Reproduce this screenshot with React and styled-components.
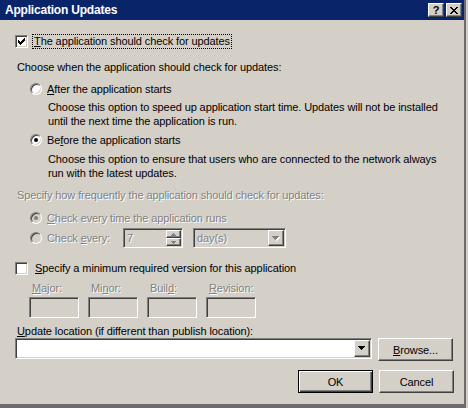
import React from "react"
import styled, { createGlobalStyle, css } from "styled-components"

const GlobalStyle = createGlobalStyle`
  html, body {
    margin: 0;
    padding: 0;
    background: #d4d0c8;
  }
  body {
    font-family: "Liberation Sans", Arial, sans-serif;
    font-size: 11px;
    letter-spacing: -0.1px;
    color: #000;
  }
`

const sunken = css`
  box-sizing: border-box;
  border: 1px solid;
  border-color: #808080 #ffffff #ffffff #808080;
  box-shadow: inset 1px 1px 0 #404040, inset -1px -1px 0 #d4d0c8;
`

const raised = css`
  box-sizing: border-box;
  background: #d4d0c8;
  border: 1px solid;
  border-color: #ffffff #404040 #404040 #ffffff;
  box-shadow: inset -1px -1px 0 #808080, inset 1px 1px 0 #d4d0c8;
`

const disabledText = css`
  color: #808080;
  text-shadow: 1px 1px 0 #ffffff;
`

const Window = styled.div`
  width: 466px;
  height: 408px;
  box-sizing: border-box;
  background: #d4d0c8;
  border-right: 2px solid #6c6c6c;
  border-bottom: 4px solid #6c6c6c;
  display: flex;
  flex-direction: column;
`

const TitleBar = styled.div`
  height: 20px;
  flex: none;
  background: #0a246a;
  display: flex;
  align-items: center;
  padding: 0 2px 0 5px;
`

const Title = styled.div`
  flex: 1;
  color: #fff;
  font-weight: bold;
  font-size: 12px;
  letter-spacing: -0.2px;
`

const CaptionButtons = styled.div`
  display: flex;
  gap: 2px;
`

const CaptionButton = styled.div`
  ${raised};
  width: 16px;
  height: 14px;
  display: flex;
  align-items: center;
  justify-content: center;
  font-weight: bold;
  font-size: 11px;
  line-height: 1;
`

const Body = styled.div`
  display: flex;
  flex-direction: column;
  padding: 0 10px 0 15px;
`

const Row = styled.div`
  display: flex;
  align-items: center;
  height: ${p => p.$h || 14}px;
  margin-top: ${p => p.$mt || 0}px;
  padding-left: ${p => p.$indent || 0}px;
  gap: ${p => p.$gap || 0}px;
`

const Line = styled.div`
  margin-top: ${p => p.$mt || 0}px;
  margin-left: ${p => p.$indent || 2}px;
  line-height: 14px;
  ${p => p.$disabled && disabledText};
`

const Desc = styled.div`
  margin-top: ${p => p.$mt || 0}px;
  margin-left: 33px;
  line-height: 14px;
  width: 400px;
`

const Box = styled.span`
  ${sunken};
  width: 13px;
  height: 13px;
  flex: none;
  background: #fff;
  display: flex;
  align-items: center;
  justify-content: center;
`

const Focus = styled.span`
  margin-left: 4px;
  padding: 0 1px;
  border: 1px dotted #000;
  line-height: 13px;
`

const Radio = styled.span`
  ${sunken};
  width: 12px;
  height: 12px;
  flex: none;
  border-radius: 50%;
  background: ${p => (p.$disabled ? "#d4d0c8" : "#fff")};
  display: flex;
  align-items: center;
  justify-content: center;

  &::after {
    content: "";
    display: ${p => (p.$checked ? "block" : "none")};
    width: 4px;
    height: 4px;
    border-radius: 50%;
    background: ${p => (p.$disabled ? "#808080" : "#000")};
  }
`

const RadioLabel = styled.span`
  margin-left: 5px;
  ${p => p.$disabled && disabledText};
  ${p => p.$width && `width: ${p.$width}px;`}
`

const Field = styled.div`
  ${sunken};
  width: ${p => p.$w}px;
  height: ${p => p.$h || 20}px;
  background: ${p => (p.$white ? "#fff" : "#d4d0c8")};
  display: flex;
  align-items: stretch;
  padding: 1px;
`

const FieldText = styled.div`
  flex: 1;
  display: flex;
  align-items: center;
  padding-left: 2px;
  ${disabledText};
`

const DropButton = styled.div`
  ${raised};
  width: 16px;
  display: flex;
  align-items: center;
  justify-content: center;
`

const Spinner = styled.div`
  width: 15px;
  display: flex;
  flex-direction: column;
`

const SpinHalf = styled.div`
  ${raised};
  flex: 1;
  display: flex;
  align-items: center;
  justify-content: center;
`

const VersionGrid = styled.div`
  display: grid;
  grid-template-columns: repeat(4, 50px);
  column-gap: 9px;
  margin-left: 14px;
  margin-top: 6px;
`

const VersionLabel = styled.div`
  line-height: 14px;
  margin-left: 3px;
  margin-bottom: 2px;
  ${disabledText};
`

const Buttons = styled.div`
  display: flex;
  justify-content: flex-end;
  gap: 6px;
  margin-top: ${p => p.$mt || 0}px;
`

const Button = styled.div`
  ${raised};
  width: ${p => p.$w || 75}px;
  height: 23px;
  display: flex;
  align-items: center;
  justify-content: center;
  ${p =>
    p.$default &&
    css`
      border: 1px solid #000;
      box-shadow: inset 1px 1px 0 #fff, inset -1px -1px 0 #404040,
        inset -2px -2px 0 #808080;
    `}
`

const Arrow = ({ disabled }) => (
  <svg width="8" height="5" shapeRendering="crispEdges" style={{ display: "block" }}>
    {disabled && <path d="M1 1h7v1H1z M2 2h5v1H2z M3 3h3v1H3z M4 4h1v1H4z" fill="#fff" />}
    <path d="M0 0h7v1H0z M1 1h5v1H1z M2 2h3v1H2z M3 3h1v1H3z" fill={disabled ? "#808080" : "#000"} />
  </svg>
)

const SpinArrow = ({ up }) => (
  <svg width="5" height="3" shapeRendering="crispEdges" style={{ display: "block" }}>
    <path
      d={up ? "M2 0h1v1H2z M1 1h3v1H1z M0 2h5v1H0z" : "M0 0h5v1H0z M1 1h3v1H1z M2 2h1v1H2z"}
      fill="#808080"
    />
  </svg>
)

const Check = () => (
  <svg width="7" height="7" shapeRendering="crispEdges" style={{ display: "block" }}>
    <path
      d="M6 0h1v3H6z M5 1h1v3H5z M4 2h1v3H4z M3 3h1v3H3z M2 4h1v3H2z M1 3h1v3H1z M0 2h1v3H0z"
      fill="#000"
    />
  </svg>
)

const CloseGlyph = () => (
  <svg width="8" height="7" shapeRendering="crispEdges" style={{ display: "block" }}>
    <path
      d="M0 0h2v1H0z M6 0h2v1H6z M1 1h2v1H1z M5 1h2v1H5z M2 2h4v1H2z M3 3h2v1H3z M2 4h4v1H2z M1 5h2v1H1z M5 5h2v1H5z M0 6h2v1H0z M6 6h2v1H6z"
      fill="#000"
    />
  </svg>
)

export default function App() {
  return (
    <>
      <GlobalStyle />
      <Window>
        <TitleBar>
          <Title>Application Updates</Title>
          <CaptionButtons>
            <CaptionButton>?</CaptionButton>
            <CaptionButton>
              <CloseGlyph />
            </CaptionButton>
          </CaptionButtons>
        </TitleBar>
        <Body>
          <Row $mt={14} $h={15}>
            <Box>
              <Check />
            </Box>
            <Focus>
              <u>T</u>he application should check for updates
            </Focus>
          </Row>

          <Line $mt={11}>Choose when the application should check for updates:</Line>

          <Row $mt={8} $indent={15}>
            <Radio />
            <RadioLabel>
              <u>A</u>fter the application starts
            </RadioLabel>
          </Row>
          <Desc $mt={4}>
            Choose this option to speed up application start time. Updates will not be installed
            until the next time the application is run.
          </Desc>

          <Row $mt={5} $indent={15}>
            <Radio $checked />
            <RadioLabel>
              Be<u>f</u>ore the application starts
            </RadioLabel>
          </Row>
          <Desc $mt={5}>
            Choose this option to ensure that users who are connected to the network always
            run with the latest updates.
          </Desc>

          <Line $mt={8} $disabled>
            Specify how frequently the application should check for updates:
          </Line>

          <Row $mt={9} $indent={15}>
            <Radio $checked $disabled />
            <RadioLabel $disabled>
              <u>C</u>heck every time the application runs
            </RadioLabel>
          </Row>

          <Row $mt={3} $h={20} $indent={15}>
            <Radio $disabled />
            <RadioLabel $disabled $width={76}>
              Check <u>e</u>very:
            </RadioLabel>
            <Field $w={60}>
              <FieldText>7</FieldText>
              <Spinner>
                <SpinHalf>
                  <SpinArrow up />
                </SpinHalf>
                <SpinHalf>
                  <SpinArrow />
                </SpinHalf>
              </Spinner>
            </Field>
            <Field $w={93} style={{ marginLeft: 10 }}>
              <FieldText>day(s)</FieldText>
              <DropButton>
                <Arrow disabled />
              </DropButton>
            </Field>
          </Row>

          <Row $mt={13}>
            <Box />
            <RadioLabel style={{ marginLeft: 7 }}>
              <u>S</u>pecify a minimum required version for this application
            </RadioLabel>
          </Row>

          <VersionGrid>
            <VersionLabel>
              <u>M</u>ajor:
            </VersionLabel>
            <VersionLabel>
              Mi<u>n</u>or:
            </VersionLabel>
            <VersionLabel>
              Buil<u>d</u>:
            </VersionLabel>
            <VersionLabel>
              <u>R</u>evision:
            </VersionLabel>
            <Field $w={50} $h={21} />
            <Field $w={50} $h={21} />
            <Field $w={50} $h={21} />
            <Field $w={50} $h={21} />
          </VersionGrid>

          <Line $mt={6}>
            <u>U</u>pdate location (if different than publish location):
          </Line>

          <Row $h={23} $gap={6}>
            <Field $w={357} $h={21} $white style={{ alignSelf: "flex-start" }}>
              <div style={{ flex: 1 }} />
              <DropButton>
                <Arrow />
              </DropButton>
            </Field>
            <Button $w={75}>
              <span>
                <u>B</u>rowse...
              </span>
            </Button>
          </Row>

          <Buttons $mt={9}>
            <Button $default>OK</Button>
            <Button>Cancel</Button>
          </Buttons>
        </Body>
      </Window>
    </>
  )
}
